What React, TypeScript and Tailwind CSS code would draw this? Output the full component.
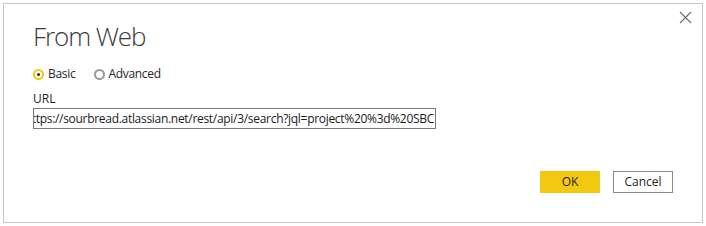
import React from "react";

export default function App() {
  const font = { fontFamily: '"Open Sans", "Noto Sans", sans-serif' };
  return (
    <div className="w-[706px] h-[226px] bg-white p-[3px]" style={font}>
      <div className="relative w-[700px] h-[220px] border border-[#c8c8c8] bg-white pl-[29px] pt-[17px]">
        <button className="absolute right-[10px] top-[6px] w-[14px] h-[14px] flex items-center justify-center">
          <svg width="13" height="13" viewBox="0 0 13 13">
            <path d="M1 1L12 12M12 1L1 12" stroke="#6b6b6b" strokeWidth="1.1" />
          </svg>
        </button>
        <div className="text-[26px] font-light text-[#3b3b3b] leading-[30px] tracking-[-1.1px]">From Web</div>
        <div className="flex items-center mt-[16px] h-[14px] text-[12px] text-[#252525] tracking-[-0.3px]">
          <div className="flex items-center">
            <span className="w-[11px] h-[11px] rounded-full border-[2px] border-[#f2c811] flex items-center justify-center">
              <span className="w-[3px] h-[3px] rounded-full bg-[#252525]" />
            </span>
            <span className="ml-[4px]">Basic</span>
          </div>
          <div className="flex items-center ml-[19px]">
            <span className="w-[11px] h-[11px] rounded-full border-[2px] border-[#9a9a9a]" />
            <span className="ml-[3px]">Advanced</span>
          </div>
        </div>
        <div className="mt-[10px] text-[12px] text-[#252525] leading-[16px]">URL</div>
        <div className="mt-[1px] w-[403px] h-[21px] border border-[#7a7a7a] flex items-center justify-end overflow-hidden pr-[1px]">
          <span className="whitespace-nowrap text-[12px] text-[#1a1a1a] tracking-[-0.3px]">
            https://sourbread.atlassian.net/rest/api/3/search?jql=project%20%3d%20SBC
          </span>
        </div>
        <div className="flex justify-end mt-[42px] pr-[29px]">
          <button className="w-[60px] h-[22px] bg-[#f2c811] text-[12px] text-[#252525] flex items-center justify-center">
            OK
          </button>
          <button className="ml-[13px] w-[60px] h-[22px] border border-[#8a8a8a] bg-white text-[12px] text-[#252525] flex items-center justify-center">
            Cancel
          </button>
        </div>
      </div>
    </div>
  );
}
